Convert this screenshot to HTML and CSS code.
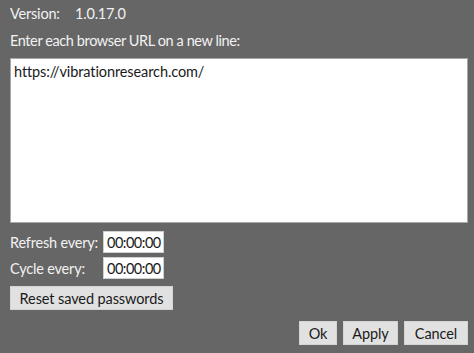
FILE: index.html
```html
<!DOCTYPE html>
<html lang="en">
  <head>
    <meta charset="UTF-8" />
    <meta name="viewport" content="width=device-width, initial-scale=1.0" />
    <title>Settings</title>
    <link rel="stylesheet" href="styles.css">
  </head>
  <body>
    <div class="dialog">
      <div class="version">
        <span class="version-label">Version:</span>
        <span>1.0.17.0</span>
      </div>
      <p class="prompt">Enter each browser URL on a new line:</p>
      <textarea class="urls">https://vibrationresearch.com/</textarea>
      <div class="field first">
        <label for="refresh">Refresh every:</label>
        <input id="refresh" type="text" value="00:00:00" />
      </div>
      <div class="field">
        <label for="cycle">Cycle every:</label>
        <input id="cycle" type="text" value="00:00:00" />
      </div>
      <button class="btn reset">Reset saved passwords</button>
      <div class="actions">
        <button class="btn ok">Ok</button>
        <button class="btn apply">Apply</button>
        <button class="btn cancel">Cancel</button>
      </div>
    </div>
  </body>
</html>
```

FILE: styles.css
```css
body {
  font-family: "Lato", "Open Sans", sans-serif;
  font-size: 14.5px;
  letter-spacing: -0.2px;
  color: #f2f2f2;
  background-color: #666;
  margin: 0;
  padding: 0;
}

.dialog {
  padding: 4px 6px 0 10px;
}

.version {
  display: flex;
  line-height: 20px;
}

.version-label {
  width: 65px;
}

.prompt {
  margin: 7px 0 0;
  line-height: 20px;
  letter-spacing: -0.4px;
}

.urls {
  display: block;
  box-sizing: border-box;
  width: 458px;
  height: 165px;
  margin-top: 7px;
  padding: 3px 3px;
  border: 1px solid #a8a8a8;
  resize: none;
  font-family: inherit;
  font-size: 14.5px;
  letter-spacing: -0.1px;
  line-height: 20px;
  color: #1a1a1a;
  background-color: #fff;
  outline: none;
}

.field {
  display: flex;
  align-items: center;
  margin-top: 4px;
}

.field.first {
  margin-top: 8px;
}

.field label {
  flex-shrink: 0;
  width: 93px;
  white-space: nowrap;
}

.field input {
  box-sizing: border-box;
  width: 61px;
  height: 22px;
  padding: 0 0 0 3px;
  border: 1px solid #d0d0d0;
  font-family: inherit;
  font-size: 14.5px;
  letter-spacing: -0.5px;
  color: #1a1a1a;
  background-color: #fff;
}

.btn {
  box-sizing: border-box;
  height: 24px;
  padding: 0;
  border: 1px solid #d4d4d4;
  font-family: inherit;
  font-size: 14.5px;
  letter-spacing: -0.1px;
  color: #1a1a1a;
  background-color: #e1e1e1;
}

.reset {
  display: block;
  width: 163px;
  margin-top: 7px;
}

.actions {
  display: flex;
  justify-content: flex-end;
  gap: 6px;
  margin-top: 11px;
}

.ok {
  width: 38px;
}

.apply {
  width: 55px;
}

.cancel {
  width: 64px;
}
```
